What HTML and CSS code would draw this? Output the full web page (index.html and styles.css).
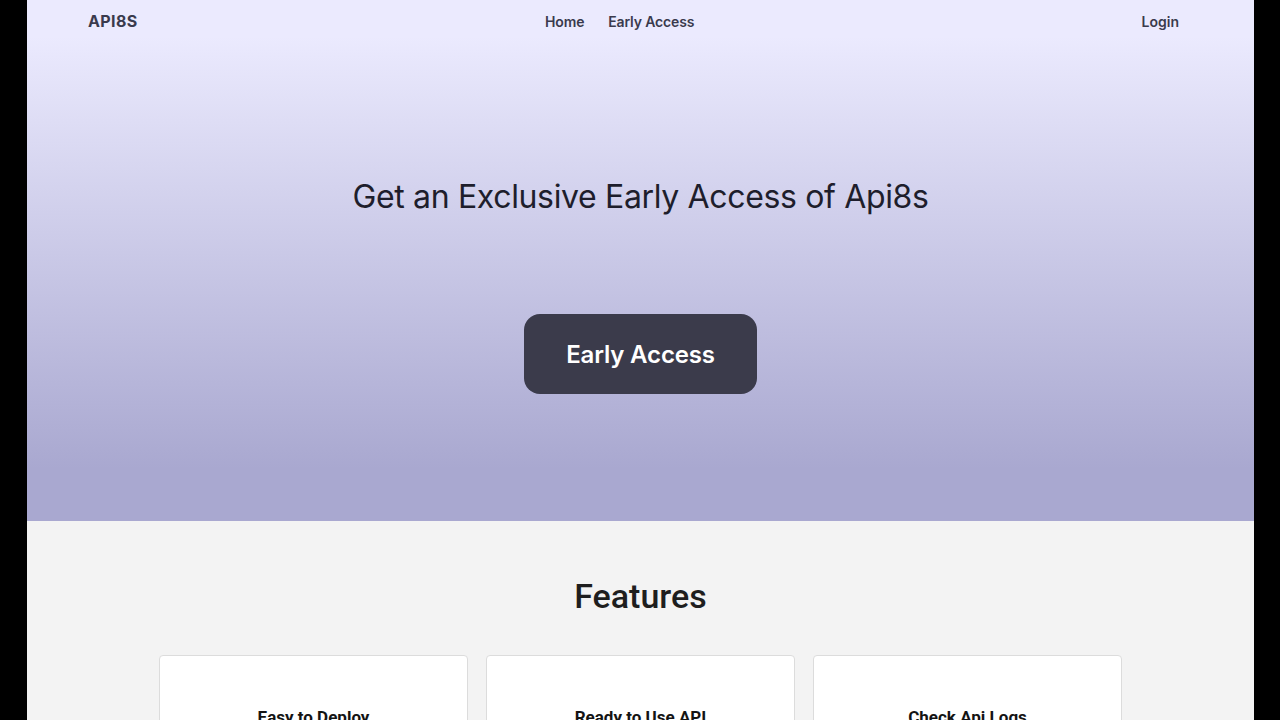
FILE: index.html
```html
<!DOCTYPE html>
<html lang="en">
<head>
    <meta charset="UTF-8">
    <meta name="viewport" content="width=device-width, initial-scale=1.0">
    <title>Api8s</title>
    <link rel="stylesheet" href="styles.css">
</head>
<body>
<div class="page">
    <div class="hero">
        <div class="nav">
            <a class="logo" href="#">API8S</a>
            <div class="nav-links">
                <a href="#">Home</a>
                <a href="#">Early Access</a>
            </div>
            <a class="login" href="#">Login</a>
        </div>
        <h1 class="hero-title">Get an Exclusive Early Access of Api8s</h1>
        <a class="hero-btn" href="#">Early Access</a>
    </div>
    <div class="features">
        <h2>Features</h2>
        <div class="cards">
            <div class="card"><h3>Easy to Deploy</h3></div>
            <div class="card"><h3>Ready to Use API</h3></div>
            <div class="card"><h3>Check Api Logs</h3></div>
        </div>
    </div>
</div>
</body>
</html>
```

FILE: styles.css
```css
html, body {
    margin: 0;
    padding: 0;
    height: 100%;
    overflow: hidden;
}
body {
    background: #000;
    font-family: Inter, "Liberation Sans", sans-serif;
}
a {
    text-decoration: none;
    color: inherit;
}
.page {
    margin: 0 26px 0 27px;
    height: 100%;
    background: #f3f3f3;
}
.hero {
    height: 521px;
    background: linear-gradient(#ebeafe 7%, #a9a8d0 90%);
    text-align: center;
    overflow: hidden;
}
.nav {
    display: flex;
    align-items: center;
    justify-content: space-between;
    height: 42px;
    padding: 0 75px 0 61px;
    color: #3a3a4d;
}
.logo {
    font-size: 16px;
    font-weight: 700;
    letter-spacing: 0.4px;
}
.nav-links {
    display: flex;
    gap: 24px;
    margin-right: 40px;
    font-size: 14px;
    font-weight: 600;
    letter-spacing: -0.15px;
}
.login {
    font-size: 14px;
    font-weight: 600;
}
.hero-title {
    margin: 135px 0 0;
    font-size: 32px;
    line-height: 40px;
    font-weight: 400;
    color: #1e1e2c;
    letter-spacing: -0.35px;
}
.hero-btn {
    display: inline-flex;
    align-items: center;
    justify-content: center;
    margin-top: 97px;
    width: 233px;
    height: 80px;
    border-radius: 16px;
    background: #3b3b4b;
    color: #fff;
    font-size: 24px;
    font-weight: 600;
    letter-spacing: -0.15px;
}
.features {
    padding-top: 54px;
    text-align: center;
}
.features h2 {
    margin: 0;
    font-family: Roboto, "Liberation Sans", sans-serif;
    font-size: 34px;
    line-height: 42px;
    font-weight: 500;
    color: #1e1e1e;
}
.cards {
    display: flex;
    justify-content: center;
    gap: 18px;
    margin-top: 38px;
}
.card {
    width: 307px;
    height: 200px;
    background: #fff;
    border: 1px solid #dcdcdc;
    border-radius: 4px;
}
.card h3 {
    margin: 49px 0 0;
    font-family: Roboto, "Liberation Sans", sans-serif;
    font-size: 17px;
    line-height: 24px;
    font-weight: 700;
    color: #141414;
}
```
